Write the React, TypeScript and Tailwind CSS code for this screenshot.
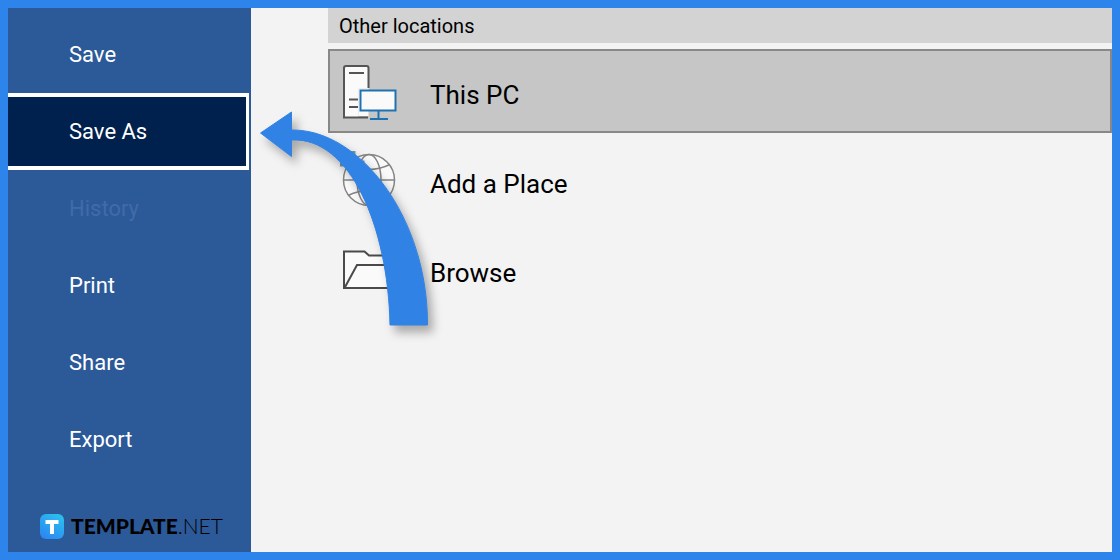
import { useState } from 'react';
import type { ReactNode } from 'react';

const menuItems = [
  { label: 'Save' },
  { label: 'Save As' },
  { label: 'History', disabled: true },
  { label: 'Print' },
  { label: 'Share' },
  { label: 'Export' },
];

function PcIcon() {
  return (
    <svg className="w-14 h-15 shrink-0" viewBox="0 0 56 60" fill="none" aria-hidden="true">
      <path d="M2 56.5V7a2 2 0 0 1 2-2h21a2 2 0 0 1 2 2v49.5z" fill="#fafafa" />
      <path d="M16.5 27.5h12V60h-12z" fill="#c6c6c6" />
      <path d="M26.5 27V7a2 2 0 0 0-2-2H4a2 2 0 0 0-2 2v49.5h24" stroke="#555" strokeWidth="2" />
      <path d="M7 12h15M7 38.5h9M7 46h9" stroke="#555" strokeWidth="2" />
      <path d="M16.5 27.5h10V55h-10z" fill="#fafafa" />
      <path d="M18.5 29.5h35v20h-35z" fill="#fafafa" stroke="#1f72b0" strokeWidth="2" />
      <path d="M36.5 50v7M28 58h18" stroke="#1f72b0" strokeWidth="2" />
    </svg>
  );
}

function GlobeIcon() {
  return (
    <svg className="w-14 h-15 shrink-0 overflow-visible" viewBox="0 0 56 60" fill="none" aria-hidden="true">
      <circle cx="27" cy="30" r="25.5" fill="#fafafa" />
      <g stroke="#858585" strokeWidth="1.5">
        <circle cx="27" cy="30" r="25.5" />
        <ellipse cx="27" cy="30" rx="12" ry="25.5" />
        <path d="M1.500 30h51M6 14.500q21 10 42 0M6 45.500q21-10 42 0" />
      </g>
      <path d="M7.500 1h6v9.500h9v6h-9v8h-6v-8H-2v-6h9.500z" fill="#7399a8" />
    </svg>
  );
}

function FolderIcon() {
  return (
    <svg className="w-14 h-15 shrink-0" viewBox="0 0 56 60" fill="none" aria-hidden="true">
      <path
        d="M2 49V12.500h20.500l4.500 4H48V26h6l-8 23z"
        fill="#fafafa"
        stroke="#4a4a4a"
        strokeWidth="2"
      />
      <path d="M2.500 49 15 26h39" stroke="#4a4a4a" strokeWidth="2" />
    </svg>
  );
}

const locations: { label: string; icon: ReactNode }[] = [
  { label: 'This PC', icon: <PcIcon /> },
  { label: 'Add a Place', icon: <GlobeIcon /> },
  { label: 'Browse', icon: <FolderIcon /> },
];

function Logo() {
  return (
    <a href="#" className="flex items-center gap-[7px] pl-8 pb-[13px] mt-auto text-black">
      <svg className="w-6 h-[25px]" viewBox="0 0 24 25" aria-hidden="true">
        <defs>
          <linearGradient id="logoFill" x1="0.8" y1="0" x2="0.2" y2="1">
            <stop offset="0" stopColor="#2cc0ee" />
            <stop offset="1" stopColor="#2b86f3" />
          </linearGradient>
        </defs>
        <rect width="24" height="25" rx="6" fill="url(#logoFill)" />
        <path d="M5.500 6h13v4h-4.500v10h-4V10H5.500z" fill="#fff" />
      </svg>
      <span className="pb-[2px] font-['Lato',sans-serif] text-[21px] leading-[22px]">
        <span className="font-black">TEMPLATE</span>
        <span className="font-light">.NET</span>
      </span>
    </a>
  );
}

export default function App() {
  const [activeItem, setActiveItem] = useState('Save As');
  const [activeLocation, setActiveLocation] = useState('This PC');

  return (
    <div className="flex min-h-screen border-8 border-[#2d85ec] bg-[#f3f3f3] font-['Roboto',sans-serif]">
      {/* Sidebar */}
      <aside className="flex flex-col w-[243px] shrink-0 pt-2 bg-[#2c5998]">
        <nav className="flex flex-col">
          {menuItems.map((item) => (
            <button
              key={item.label}
              disabled={item.disabled}
              onClick={() => setActiveItem(item.label)}
              className={`h-[77px] mr-[2px] pl-[61px] pt-px text-left text-[22px] leading-7 border-y-4 border-r-[3px] ${
                item.label === activeItem ? 'bg-[#00204d] border-white' : 'border-transparent'
              } ${item.disabled ? 'text-[#416ba8]' : 'text-white'}`}
            >
              {item.label}
            </button>
          ))}
        </nav>
        <Logo />
      </aside>

      {/* Locations */}
      <main className="relative flex-1 pl-[77px]">
        <h2 className="h-[35px] pl-[11px] text-xl leading-[36px] bg-[#d3d3d3] text-black">Other locations</h2>
        <div className="flex flex-col gap-[5px] pt-[6px]">
          {locations.map((location) => (
            <button
              key={location.label}
              onClick={() => setActiveLocation(location.label)}
              className={`flex items-center gap-8 h-[84px] pl-3 border-2 text-left text-[26px] leading-8 text-black ${
                location.label === activeLocation ? 'bg-[#c6c6c6] border-[#888888]' : 'border-transparent'
              }`}
            >
              {location.icon}
              <span className="pt-[7px]">{location.label}</span>
            </button>
          ))}
        </div>

        {/* Arrow pointing at the selected menu item */}
        <svg
          className="absolute left-0 top-[92px] w-[200px] h-60 overflow-visible pointer-events-none drop-shadow-[5px_7px_5px_rgba(0,0,0,0.3)]"
          viewBox="251 100 200 240"
          aria-hidden="true"
        >
          <path
            d="M260.500 133 291.500 112V130C360 129 428 218 427.500 325H390C388 226 350 137 291.500 140V156.500z"
            fill="#3182e5"
            stroke="#3182e5"
            strokeWidth="1"
            strokeLinejoin="round"
          />
        </svg>
      </main>
    </div>
  );
}
